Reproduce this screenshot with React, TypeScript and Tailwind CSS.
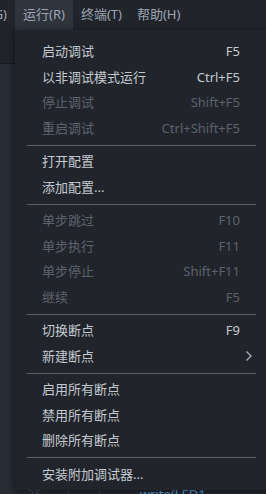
import clsx from "clsx";

type Item =
  | { kind: "sep" }
  | { kind: "item"; label: string; shortcut?: string; disabled?: boolean; submenu?: boolean };

const items: Item[] = [
  { kind: "item", label: "启动调试", shortcut: "F5" },
  { kind: "item", label: "以非调试模式运行", shortcut: "Ctrl+F5" },
  { kind: "item", label: "停止调试", shortcut: "Shift+F5", disabled: true },
  { kind: "item", label: "重启调试", shortcut: "Ctrl+Shift+F5", disabled: true },
  { kind: "sep" },
  { kind: "item", label: "打开配置" },
  { kind: "item", label: "添加配置..." },
  { kind: "sep" },
  { kind: "item", label: "单步跳过", shortcut: "F10", disabled: true },
  { kind: "item", label: "单步执行", shortcut: "F11", disabled: true },
  { kind: "item", label: "单步停止", shortcut: "Shift+F11", disabled: true },
  { kind: "item", label: "继续", shortcut: "F5", disabled: true },
  { kind: "sep" },
  { kind: "item", label: "切换断点", shortcut: "F9" },
  { kind: "item", label: "新建断点", submenu: true },
  { kind: "sep" },
  { kind: "item", label: "启用所有断点" },
  { kind: "item", label: "禁用所有断点" },
  { kind: "item", label: "删除所有断点" },
  { kind: "sep" },
  { kind: "item", label: "安装附加调试器..." },
];

const font = "font-['Segoe_UI','Noto_Sans','Noto_Sans_CJK_SC',sans-serif]";

function MenuBar() {
  return (
    <div className="flex h-[30px] shrink-0 items-stretch bg-[#21252b] text-[13px] text-[#9da5b4]">
      <div className="-ml-[50px] flex w-[65px] items-center justify-end pr-[8px]">调试(G)</div>
      <div className="flex items-center bg-[#2f343d] px-[8px]">运行(R)</div>
      <div className="flex items-center px-[8px]">终端(T)</div>
      <div className="flex items-center px-[7px]">帮助(H)</div>
    </div>
  );
}

function RunMenu() {
  return (
    <div className="absolute left-[15px] top-[30px] w-[260px] bg-[#21252b] pb-[3px] pt-[9px] shadow-[0_2px_8px_rgba(0,0,0,0.6)]">
      {items.map((item, index) => {
        if (item.kind === "sep") {
          return (
            <div key={`sep__${index}`} className="flex h-[8px] items-center pl-[12px] pr-[19px]">
              <hr className="h-px w-full border-0 bg-[#5a5f69]" />
            </div>
          );
        }

        return (
          <div
            key={item.label}
            className={clsx(
              "flex h-[25.5px] items-center justify-between pl-[27px] pr-[35px] text-[13px]",
              item.disabled ? "text-[#5d626c]" : "text-[#c4c8d0]"
            )}
          >
            <span>{item.label}</span>
            {item.shortcut && <span>{item.shortcut}</span>}
            {item.submenu && (
              <svg
                width="8"
                height="12"
                viewBox="0 0 8 12"
                className="-mr-[13px] text-[#aab0ba]"
                fill="none"
                stroke="currentColor"
                strokeWidth="1.3"
              >
                <path d="M1.5 1.5 6 6l-4.5 4.5" />
              </svg>
            )}
          </div>
        );
      })}
    </div>
  );
}

export default function App() {
  return (
    <div className={clsx("relative h-[494px] w-[266px] overflow-hidden bg-[#282c34]", font)}>
      <MenuBar />
      <div className="h-[34px] border-b border-[#181a1f] bg-[#21252b]" />
      <div className="flex h-[430px] flex-col justify-end">
        <div className="flex h-[7px] items-start overflow-hidden text-[13px] leading-[14px]">
          <span className="w-[40px] pl-[27px] text-[#495162]">35</span>
          <span className="ml-[28px] h-[7px] border-l border-[#3b4048]" />
          <span className="ml-[30px] h-[7px] border-l border-[#3b4048]" />
          <span className="ml-[34px] text-[#61afef]">_write(LED1</span>
        </div>
      </div>
      <RunMenu />
    </div>
  );
}
